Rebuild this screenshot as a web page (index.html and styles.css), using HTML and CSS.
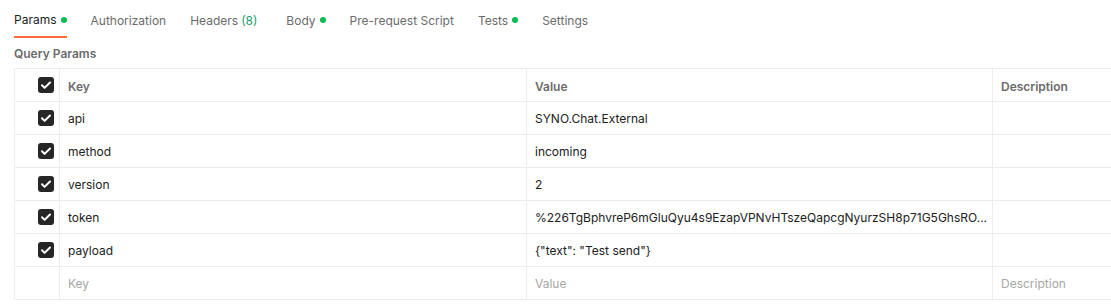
FILE: index.html
```html
<!DOCTYPE html>
<html lang="en">
<head>
    <meta charset="UTF-8">
    <title>Params</title>
    <link rel="stylesheet" href="styles.css">
</head>
<body>
    <nav class="tabs">
        <div class="tab active">Params <span class="dot"></span></div>
        <div class="tab">Authorization</div>
        <div class="tab">Headers <span class="count">(8)</span></div>
        <div class="tab">Body <span class="dot"></span></div>
        <div class="tab">Pre-request Script</div>
        <div class="tab">Tests <span class="dot"></span></div>
        <div class="tab">Settings</div>
    </nav>

    <h2 class="section-title">Query Params</h2>

    <table class="params">
        <colgroup>
            <col class="col-check">
            <col class="col-key">
            <col class="col-value">
            <col class="col-desc">
        </colgroup>
        <tr class="head">
            <td class="check"><span class="box"><svg viewBox="0 0 16 16"><path d="M4 8.3l2.6 2.6L12 5.5"/></svg></span></td>
            <td>Key</td>
            <td>Value</td>
            <td>Description</td>
        </tr>
        <tr>
            <td class="check"><span class="box"><svg viewBox="0 0 16 16"><path d="M4 8.3l2.6 2.6L12 5.5"/></svg></span></td>
            <td>api</td>
            <td>SYNO.Chat.External</td>
            <td></td>
        </tr>
        <tr>
            <td class="check"><span class="box"><svg viewBox="0 0 16 16"><path d="M4 8.3l2.6 2.6L12 5.5"/></svg></span></td>
            <td>method</td>
            <td>incoming</td>
            <td></td>
        </tr>
        <tr>
            <td class="check"><span class="box"><svg viewBox="0 0 16 16"><path d="M4 8.3l2.6 2.6L12 5.5"/></svg></span></td>
            <td>version</td>
            <td>2</td>
            <td></td>
        </tr>
        <tr>
            <td class="check"><span class="box"><svg viewBox="0 0 16 16"><path d="M4 8.3l2.6 2.6L12 5.5"/></svg></span></td>
            <td>token</td>
            <td>%226TgBphvreP6mGluQyu4s9EzapVPNvHTszeQapcgNyurzSH8p71G5GhsRO...</td>
            <td></td>
        </tr>
        <tr>
            <td class="check"><span class="box"><svg viewBox="0 0 16 16"><path d="M4 8.3l2.6 2.6L12 5.5"/></svg></span></td>
            <td>payload</td>
            <td>{"text": "Test send"}</td>
            <td></td>
        </tr>
        <tr class="empty">
            <td class="check"></td>
            <td>Key</td>
            <td>Value</td>
            <td>Description</td>
        </tr>
    </table>
</body>
</html>
```

FILE: styles.css
```css
:root {
    --text-color: #212121;
    --muted-color: #6b6b6b;
    --placeholder-color: #a6a6a6;
    --border-color: #ededed;
    --accent-color: #ff6c37;
    --success-color: #0cbb52;
}

body {
    margin: 0;
    background: #ffffff;
    font-family: Inter, "Noto Sans", sans-serif;
    font-size: 12px;
    color: var(--text-color);
    overflow: hidden;
}

.tabs {
    display: flex;
    gap: 24px;
    padding: 0 14px;
    height: 38px;
}

.tab {
    display: flex;
    align-items: center;
    gap: 4px;
    font-size: 12px;
    color: var(--muted-color);
    border-bottom: 1px solid transparent;
    height: 38px;
    box-sizing: border-box;
    padding-top: 3px;
}

.tab.active {
    color: var(--text-color);
    border-bottom: 2px solid var(--accent-color);
}

.dot {
    width: 6px;
    height: 6px;
    border-radius: 50%;
    background: var(--success-color);
}

.count {
    color: #1a9c74;
    margin-left: -1px;
    margin-right: 5px;
}

.section-title {
    margin: 8px 14px 7px;
    font-size: 12px;
    font-weight: 600;
    color: var(--muted-color);
}

.params {
    border-collapse: collapse;
    table-layout: fixed;
    width: 1130px;
    margin-left: 14px;
}

.col-check { width: 45px; }
.col-key { width: 467px; }
.col-value { width: 466px; }

.params tr {
    height: 33px;
}

.params td {
    border: 1px solid var(--border-color);
    padding: 1px 8px 0;
    white-space: nowrap;
    overflow: hidden;
}

.params .head td {
    font-weight: 600;
    color: var(--muted-color);
    padding-top: 2px;
}

.params .empty td {
    color: var(--placeholder-color);
}

.params td.check {
    padding: 0 0 0 23px;
}

.box {
    display: block;
    width: 16px;
    height: 16px;
    border-radius: 3px;
    background: #262626;
}

.box svg {
    display: block;
    width: 16px;
    height: 16px;
    fill: none;
    stroke: #ffffff;
    stroke-width: 2;
    stroke-linecap: round;
    stroke-linejoin: round;
}
```
